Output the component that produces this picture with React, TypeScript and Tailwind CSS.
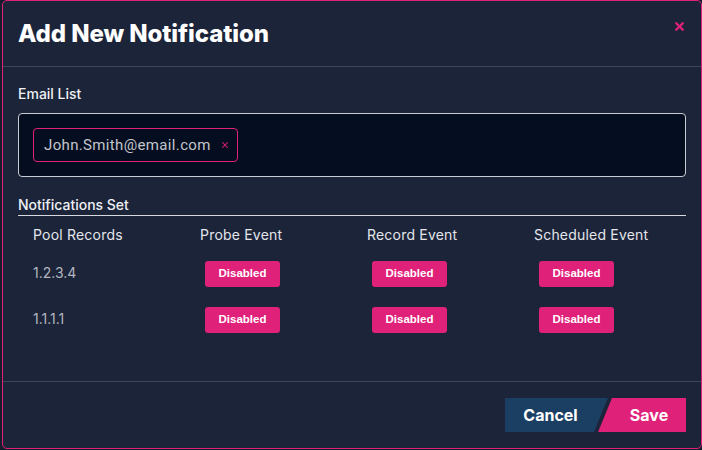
import { X } from "lucide-react"

const rows = ["1.2.3.4", "1.1.1.1"]
const columns = ["Probe Event", "Record Event", "Scheduled Event"]

function DisabledBadge() {
  return (
    <button
      type="button"
      className="flex h-[26px] w-[75px] items-center justify-center rounded-[3px] bg-[#e0217a] text-[11.5px] font-bold text-white [font-family:'Liberation_Sans',Arial,sans-serif]"
    >
      Disabled
    </button>
  )
}

export default function App() {
  return (
    <div className="h-[450px] w-[702px] overflow-hidden bg-[#161d2d] pl-[2px] [font-family:Inter,'Noto_Sans',sans-serif]">
      <div className="flex h-[449px] w-[700px] flex-col rounded-[5px] border border-[#e0217a] bg-[#1b2439]">
        <div className="flex h-[66px] shrink-0 items-center justify-between border-b border-[#3f4653] pl-[15px] pr-[15px]">
          <h1 className="text-[24px] font-extrabold tracking-[-0.1px] text-white">Add New Notification</h1>
          <X className="mb-[14px] size-[13px] text-[#e0217a]" strokeWidth={4.5} />
        </div>

        <div className="flex flex-1 flex-col px-[15px]">
          <div className="mt-[18px] text-[14px] font-medium leading-[18px] text-[#eef0f4]">Email List</div>
          <div className="mt-[10px] flex h-[64px] items-center rounded-[4px] border border-[#c9ccd3] bg-[#050e20] px-[14px]">
            <div className="flex h-[34px] items-center gap-[9px] rounded-[4px] border border-[#e0217a] pl-[10px] pr-[7px]">
              <span className="text-[15px] tracking-[0.35px] text-[#c3c5cc] [font-family:Roboto,sans-serif]">
                John.Smith@email.com
              </span>
              <X className="size-[10px] text-[#e0217a]" strokeWidth={2.5} />
            </div>
          </div>

          <div className="mt-[19px] border-b border-[#d7d9de] pb-[1px] text-[14px] font-medium leading-[18px] text-[#eef0f4]">
            Notifications Set
          </div>

          <div className="mt-[10px] grid grid-cols-[167px_167px_167px_1fr] pl-[15px] text-[14px] leading-[18px] tracking-[0.2px]">
            <div className="text-[#e4e6eb]">Pool Records</div>
            {columns.map((c) => (
              <div key={c} className="text-[#e4e6eb]">
                {c}
              </div>
            ))}
          </div>

          <div className="mt-[17px] flex flex-col gap-[20px] pl-[15px]">
            {rows.map((r) => (
              <div key={r} className="grid h-[26px] grid-cols-[167px_167px_167px_1fr] items-center">
                <div className="pb-[4px] text-[14px] text-[#b3b6bf]">{r}</div>
                {columns.map((c) => (
                  <div key={c} className="pl-[5px]">
                    <DisabledBadge />
                  </div>
                ))}
              </div>
            ))}
          </div>
        </div>

        <div className="flex h-[67px] shrink-0 items-start justify-end border-t border-[#3f4653] pr-[15px] pt-[16px]">
          <div className="flex h-[34px]">
            <button
              type="button"
              className="h-[34px] w-[103px] bg-[#1b3f63] pr-[12px] text-[16px] font-bold text-white [clip-path:polygon(0_0,100%_0,calc(100%-14px)_100%,0_100%)]"
            >
              Cancel
            </button>
            <button
              type="button"
              className="-ml-[10px] h-[34px] w-[88px] bg-[#e0217a] pl-[14px] text-[16px] font-bold text-white [clip-path:polygon(14px_0,100%_0,100%_100%,0_100%)]"
            >
              Save
            </button>
          </div>
        </div>
      </div>
    </div>
  )
}
